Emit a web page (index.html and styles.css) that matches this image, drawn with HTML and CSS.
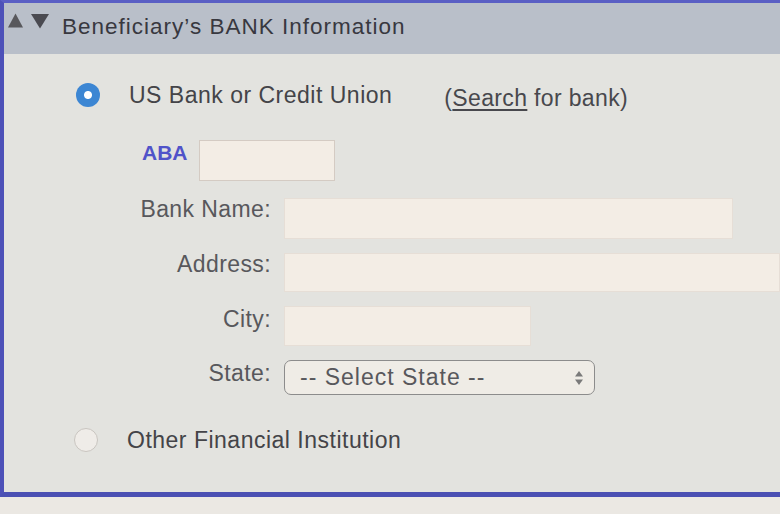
FILE: index.html
```html
<!DOCTYPE html>
<html>
<head>
<meta charset="utf-8">
<link rel="stylesheet" href="styles.css">
</head>
<body>
<div class="panel">
  <div class="panel-head">
    <svg class="toggle" width="44" height="16" viewBox="0 0 44 16">
      <polygon points="7.5,0.5 15,14.5 0,14.5" fill="#58585c"/>
      <polygon points="23,1 41,1 32,15.5" fill="#4a4a51"/>
    </svg>
    <span class="head-title">Beneficiary’s BANK Information</span>
  </div>
  <div class="panel-body">
    <div class="choice choice-us">
      <span class="radio radio-on"></span>
      <span class="choice-label">US Bank or Credit Union</span>
      <span class="search">(<u>Search</u> for bank)</span>
    </div>
    <div class="aba-row">
      <span class="aba-label">ABA</span>
      <span class="field field-aba"></span>
    </div>
    <div class="form-grid">
      <span class="flabel">Bank Name:</span>
      <span class="field field-bank"></span>
      <span class="flabel">Address:</span>
      <span class="field field-addr"></span>
      <span class="flabel flabel-city">City:</span>
      <span class="field field-city"></span>
      <span class="flabel flabel-state">State:</span>
      <span class="select">
        <span class="select-text">-- Select State --</span>
        <svg class="select-arrows" width="10" height="16" viewBox="0 0 10 16">
          <polygon points="5,1 9,6.5 1,6.5" fill="#7a7a7a"/>
          <polygon points="1,9.5 9,9.5 5,15" fill="#7a7a7a"/>
        </svg>
      </span>
    </div>
    <div class="choice choice-other">
      <span class="radio radio-off"></span>
      <span class="choice-label">Other Financial Institution</span>
    </div>
  </div>
</div>
</body>
</html>
```

FILE: styles.css
```css
html, body {
  margin: 0;
  padding: 0;
}
body {
  width: 780px;
  height: 514px;
  overflow: hidden;
  background: #ebe8e3;
  font-family: "Liberation Sans", Arial, sans-serif;
}
.panel {
  width: 800px;
  border-left: 4px solid #4d51b8;
  border-top: 3px solid #5a5fc4;
  border-bottom: 5px solid #4b50b3;
  background: #e3e3df;
}
.panel-head {
  height: 51px;
  background: #b9bfc9;
  display: flex;
  align-items: flex-start;
  box-sizing: border-box;
  padding-left: 4px;
}
.toggle {
  display: block;
  margin-top: 10px;
}
.head-title {
  margin-left: 10px;
  margin-top: 12px;
  font-size: 22.5px;
  line-height: 24px;
  color: #38383f;
  letter-spacing: 1px;
}
.panel-body {
  display: flex;
  flex-direction: column;
  padding-top: 26px;
  padding-bottom: 37px;
}
.choice {
  display: flex;
  align-items: center;
  height: 30px;
}
.choice-us {
  padding-left: 72px;
}
.choice-other {
  padding-left: 70px;
  margin-top: 30px;
}
.radio {
  width: 24px;
  height: 24px;
  border-radius: 50%;
  box-sizing: border-box;
  flex: none;
}
.radio-on {
  background: radial-gradient(circle, #ffffff 0 3.5px, #3c86d3 4.5px);
}
.radio-off {
  background: #efece8;
  border: 1.5px solid #c9c5c0;
}
.choice-label {
  margin-left: 29px;
  font-size: 23px;
  letter-spacing: 0.5px;
  color: #444448;
}
.search {
  margin-left: 52px;
  margin-top: 6px;
  font-size: 23px;
  letter-spacing: 0.35px;
  color: #48484d;
}
.search u {
  text-decoration-thickness: 1.5px;
  text-underline-offset: 3px;
}
.aba-row {
  display: flex;
  align-items: flex-start;
  margin-top: 30px;
  padding-left: 138px;
  height: 41px;
}
.aba-label {
  font-size: 21px;
  line-height: 24px;
  margin-top: 1px;
  font-weight: bold;
  color: #5053c9;
  width: 57px;
}
.field {
  display: block;
  box-sizing: border-box;
  background: #f3ede5;
  border: 1px solid #e6ded6;
}
.field-aba {
  width: 136px;
  height: 41px;
  border-color: #d4cbc3;
}
.form-grid {
  display: grid;
  grid-template-columns: 267px auto;
  column-gap: 13px;
  row-gap: 14px;
  margin-top: 17px;
  justify-items: start;
  align-items: start;
}
.flabel {
  justify-self: end;
  font-size: 23px;
  line-height: 23px;
  letter-spacing: 0.4px;
  color: #58585c;
  margin-top: 0;
}
.flabel-city {
  margin-top: 2px;
}
.flabel-state {
  margin-top: 2px;
}
.field-bank {
  width: 449px;
  height: 41px;
}
.field-addr {
  width: 496px;
  height: 39px;
}
.field-city {
  width: 247px;
  height: 40px;
}
.select {
  display: flex;
  align-items: center;
  justify-content: space-between;
  box-sizing: border-box;
  width: 311px;
  height: 35px;
  border: 1.5px solid #8c8c8c;
  border-radius: 7px;
  background: #efece6;
  padding: 0 10px 0 15px;
}
.select-text {
  font-size: 23px;
  letter-spacing: 1px;
  color: #58585c;
}
.select-arrows {
  display: block;
}
```
